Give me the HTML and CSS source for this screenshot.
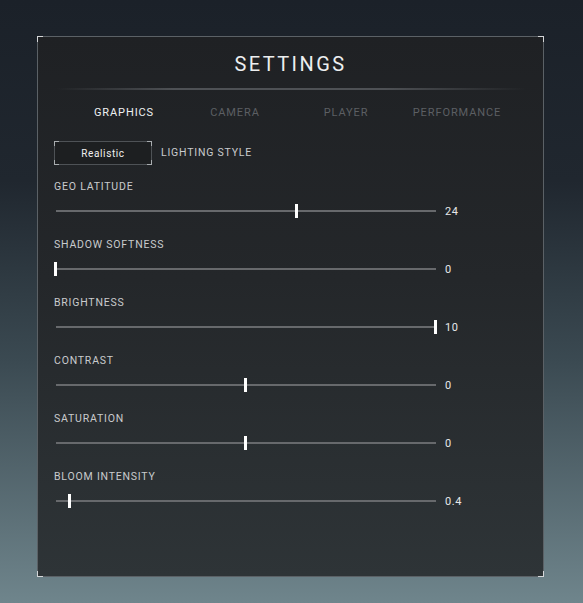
FILE: index.html
```html
<!DOCTYPE html>
<html lang="en">
  <head>
    <meta charset="UTF-8" />
    <meta name="viewport" content="width=device-width, initial-scale=1.0" />
    <link rel="stylesheet" href="styles.css">
    <title>Settings</title>
  </head>
  <body>
    <main class="panel">
      <span class="corner tl"></span>
      <span class="corner tr"></span>
      <span class="corner bl"></span>
      <span class="corner br"></span>

      <h1>SETTINGS</h1>
      <div class="divider"></div>

      <nav class="tabs">
        <span class="tab active">GRAPHICS</span>
        <span class="tab">CAMERA</span>
        <span class="tab">PLAYER</span>
        <span class="tab">PERFORMANCE</span>
      </nav>

      <section class="rows">
        <div class="select-row">
          <button class="select">
            <span class="corner tl"></span>
            <span class="corner tr"></span>
            <span class="corner bl"></span>
            <span class="corner br"></span>
            Realistic
          </button>
          <span class="label">LIGHTING STYLE</span>
        </div>

        <div class="slider-row">
          <span class="label">GEO LATITUDE</span>
          <div class="slider">
            <div class="track"><span class="thumb" style="left: 63.3%"></span></div>
            <span class="value">24</span>
          </div>
        </div>

        <div class="slider-row">
          <span class="label">SHADOW SOFTNESS</span>
          <div class="slider">
            <div class="track"><span class="thumb" style="left: 0%"></span></div>
            <span class="value">0</span>
          </div>
        </div>

        <div class="slider-row">
          <span class="label">BRIGHTNESS</span>
          <div class="slider">
            <div class="track"><span class="thumb" style="left: 100%"></span></div>
            <span class="value">10</span>
          </div>
        </div>

        <div class="slider-row">
          <span class="label">CONTRAST</span>
          <div class="slider">
            <div class="track"><span class="thumb" style="left: 50%"></span></div>
            <span class="value">0</span>
          </div>
        </div>

        <div class="slider-row">
          <span class="label">SATURATION</span>
          <div class="slider">
            <div class="track"><span class="thumb" style="left: 50%"></span></div>
            <span class="value">0</span>
          </div>
        </div>

        <div class="slider-row">
          <span class="label">BLOOM INTENSITY</span>
          <div class="slider">
            <div class="track"><span class="thumb" style="left: 3.8%"></span></div>
            <span class="value">0.4</span>
          </div>
        </div>
      </section>
    </main>
  </body>
</html>
```

FILE: styles.css
```css
* {
  box-sizing: border-box;
  margin: 0;
  padding: 0;
  font-family: Roboto, 'Liberation Sans', sans-serif;
  --line: #5b6166;
  --track: #67696c;
  --dim: #5c5f63;
  --text: #c9cbcd;
}

html,
body {
  height: 100%;
}

body {
  background: linear-gradient(#1b2129 0%, #20272f 30%, #3b4a52 60%, #6f858c 100%);
  padding: 36px 0 0 37px;
}

.panel {
  position: relative;
  width: 507px;
  height: 541px;
  padding: 15px 16px 0;
  border: 1px solid var(--line);
  background: linear-gradient(#1f2124 0%, #24272a 45%, #2e3437 100%);
}

.corner {
  position: absolute;
  width: 6px;
  height: 6px;
  border-color: #d4d6d8;
  border-style: solid;
  border-width: 0;
}

.panel > .corner.tl { top: -1px; left: -1px; border-width: 1px 0 0 1px; }
.panel > .corner.tr { top: -1px; right: -1px; border-width: 1px 1px 0 0; }
.panel > .corner.bl { bottom: -1px; left: -1px; border-width: 0 0 1px 1px; }
.panel > .corner.br { bottom: -1px; right: -1px; border-width: 0 1px 1px 0; }

h1 {
  text-align: center;
  font-size: 20px;
  font-weight: 400;
  line-height: 24px;
  letter-spacing: 2.4px;
  color: #eceeef;
}

.divider {
  height: 2px;
  margin: 12px 0 0 2px;
  width: 470px;
  background: linear-gradient(90deg, rgba(80, 83, 87, 0) 0%, #4e5155 25%, #4e5155 70%, rgba(80, 83, 87, 0) 100%);
}

.tabs {
  display: grid;
  grid-template-columns: repeat(4, 111px);
  width: 444px;
  margin: 15px auto 0;
}

.tab {
  text-align: center;
  font-size: 11px;
  line-height: 16px;
  letter-spacing: 0.9px;
  color: var(--dim);
}

.tab.active {
  color: #eef0f1;
}

.rows {
  display: grid;
  gap: 16px;
  margin-top: 20px;
}

.select-row {
  display: flex;
  align-items: center;
  gap: 9px;
  margin-bottom: -1px;
}

.select {
  position: relative;
  width: 98px;
  height: 24px;
  border: 1px solid #4e5256;
  background: #1d1f21;
  color: #f0f0f0;
  font-size: 10px;
  letter-spacing: 0.6px;
}

.select .corner {
  width: 5px;
  height: 5px;
  border-color: #a9adb0;
}

.select .corner.tl { top: -1px; left: -1px; border-width: 1px 0 0 1px; }
.select .corner.tr { top: -1px; right: -1px; border-width: 1px 1px 0 0; }
.select .corner.bl { bottom: -1px; left: -1px; border-width: 0 0 1px 1px; }
.select .corner.br { bottom: -1px; right: -1px; border-width: 0 1px 1px 0; }

.label {
  font-size: 10.5px;
  line-height: 14px;
  letter-spacing: 0.8px;
  color: var(--text);
}

.slider-row {
  display: grid;
  gap: 6px;
}

.slider {
  display: flex;
  align-items: center;
  height: 22px;
  padding-left: 2px;
  gap: 9px;
}

.track {
  position: relative;
  width: 380px;
  height: 2px;
  background: var(--track);
}

.thumb {
  position: absolute;
  top: -6px;
  width: 3px;
  height: 14px;
  margin-left: -2px;
  background: #ffffff;
}

.value {
  font-size: 11px;
  letter-spacing: 0.6px;
  color: #e6e8e9;
}
```
